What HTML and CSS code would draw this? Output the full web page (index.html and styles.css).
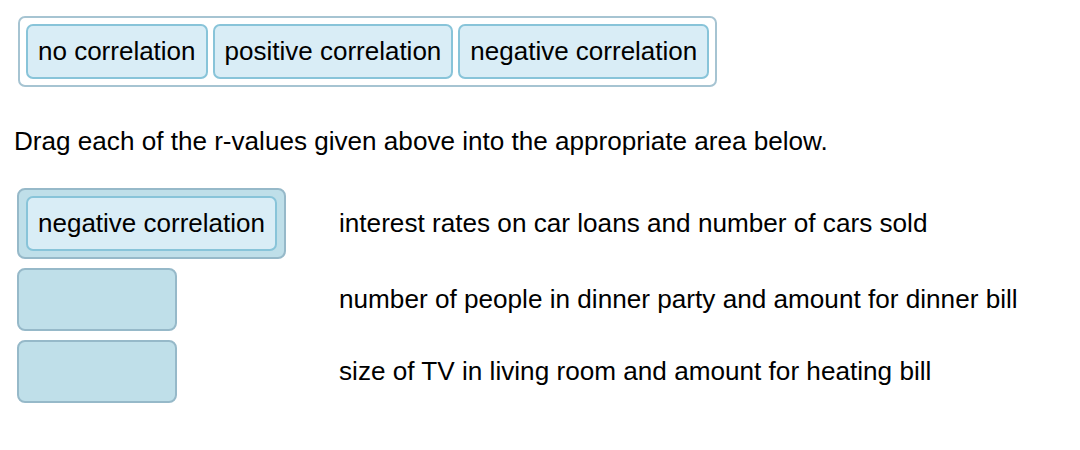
FILE: index.html
```html
<!DOCTYPE html>
<html lang="en">
<head>
    <meta charset="UTF-8">
    <meta name="viewport" content="width=device-width, initial-scale=1.0">
    <title>Correlation</title>
    <link rel="stylesheet" href="styles.css">
</head>
<body>
    <div class="bank">
        <div class="chip">no correlation</div>
        <div class="chip">positive correlation</div>
        <div class="chip">negative correlation</div>
    </div>

    <p class="prompt">Drag each of the r-values given above into the appropriate area below.</p>

    <div class="pairs">
        <div class="zone filled">
            <div class="chip">negative correlation</div>
        </div>
        <div class="label">interest rates on car loans and number of cars sold</div>

        <div class="zone"></div>
        <div class="label">number of people in dinner party and amount for dinner bill</div>

        <div class="zone"></div>
        <div class="label">size of TV in living room and amount for heating bill</div>
    </div>
</body>
</html>
```

FILE: styles.css
```css
html, body {
    margin: 0;
    padding: 0;
    background: #fff;
    color: #000;
    font-family: "Liberation Sans", Arial, sans-serif;
    font-size: 26px;
}

body {
    padding: 16px 0 0 14px;
}

.bank {
    display: inline-flex;
    gap: 5px;
    margin-left: 4px;
    padding: 6px;
    border: 2px solid #a6c4d2;
    border-radius: 7px;
}

.chip {
    padding: 10px 10px;
    line-height: 31px;
    background: #d9edf6;
    border: 2px solid #88c4d9;
    border-radius: 7px;
    white-space: nowrap;
}

.prompt {
    margin: 39px 0 0 0;
    line-height: 30px;
    font-size: 26.1px;
}

.pairs {
    display: grid;
    grid-template-columns: 322px auto;
    row-gap: 9px;
    align-items: center;
    margin-top: 32px;
    margin-left: 3px;
}

.zone {
    box-sizing: border-box;
    width: 160px;
    height: 63px;
    background: #bfdfe9;
    border: 2px solid #96b9c9;
    border-radius: 8px;
}

.zone.filled {
    width: auto;
    height: auto;
    justify-self: start;
    padding: 6px 7px;
}

.label {
    line-height: 30px;
    font-size: 26.15px;
    margin-top: -1px;
}
```
